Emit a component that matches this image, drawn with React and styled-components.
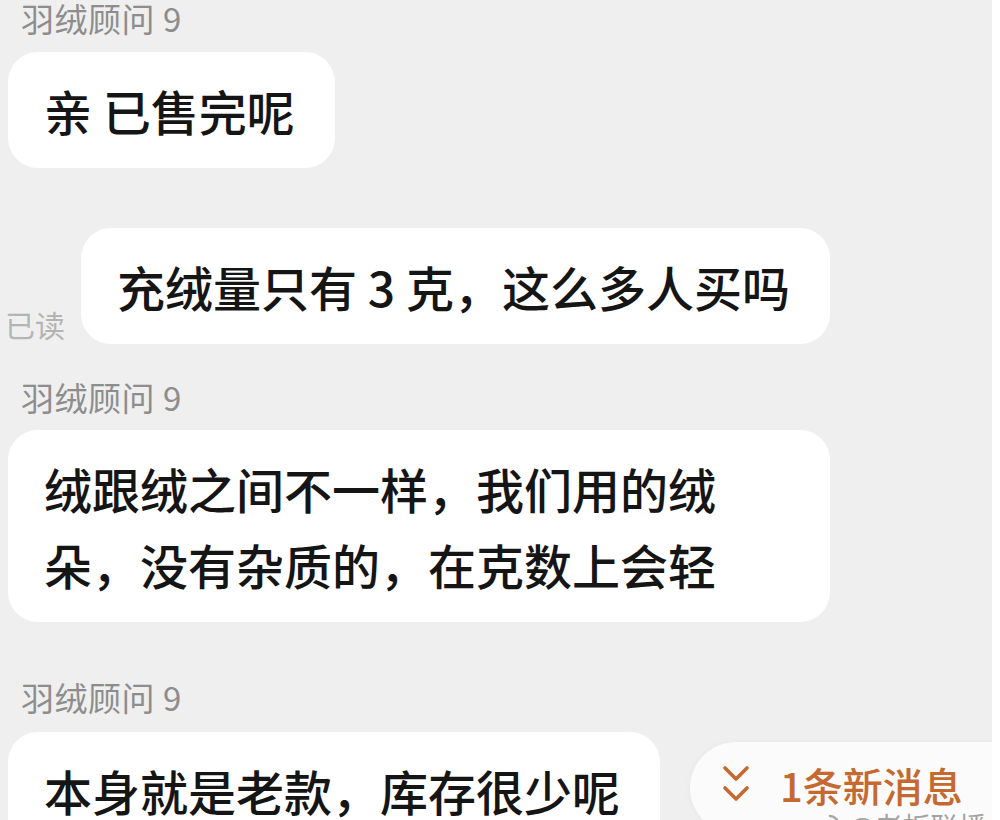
import React from "react";
import styled, { createGlobalStyle } from "styled-components";

const Global = createGlobalStyle`
  html, body {
    margin: 0;
    padding: 0;
    background: #ffffff;
  }
  body {
    font-family: "Noto Sans CJK SC", "Noto Sans", sans-serif;
  }
`;

const Page = styled.div`
  position: relative;
  width: 992px;
  height: 820px;
  overflow: hidden;
  background: #efefef;
  padding-left: 8px;
  box-sizing: border-box;
`;

const Column = styled.div`
  width: 822px;
  display: flex;
  flex-direction: column;
  align-items: flex-start;
`;

const Sender = styled.div`
  margin-top: ${(p) => p.$mt}px;
  margin-left: 13px;
  font-size: 33px;
  line-height: 36px;
  height: 36px;
  color: #8d8d8d;
  white-space: pre;
  letter-spacing: 0.5px;
`;

const Bubble = styled.div`
  margin-top: ${(p) => p.$mt}px;
  box-sizing: border-box;
  width: ${(p) => (p.$block ? "822px" : "auto")};
  padding: 20px 40px 20px 36px;
  background: #ffffff;
  border-radius: 30px;
  font-size: 48px;
  font-weight: 500;
  line-height: 76px;
  color: #151515;
  white-space: ${(p) => (p.$block ? "normal" : "pre")};
`;

const Wrap = styled.div`
  max-width: 700px;
`;

const SentRow = styled.div`
  margin-top: ${(p) => p.$mt}px;
  margin-left: -8px;
  width: 830px;
  display: flex;
  justify-content: flex-end;
  align-items: flex-end;
  gap: 16px;
`;

const ReadMark = styled.span`
  font-size: 30px;
  line-height: 40px;
  color: #b4b4b4;
  white-space: nowrap;
`;

const NewPill = styled.div`
  position: absolute;
  left: 690px;
  top: 742px;
  width: 360px;
  height: 92px;
  border-radius: 46px;
  background: #fbfbfb;
  box-shadow: 0 0 6px rgba(0, 0, 0, 0.04);
  display: flex;
  align-items: flex-start;
  padding: 22px 0 0 32px;
  box-sizing: border-box;
  gap: 30px;
`;

const NewText = styled.span`
  font-size: 40px;
  font-weight: 500;
  line-height: 42px;
  color: #c4692f;
`;

const Watermark = styled.div`
  position: absolute;
  left: 808px;
  top: 810px;
  display: flex;
  align-items: center;
  gap: 6px;
  font-size: 28px;
  line-height: 32px;
  color: #a4a4a4;
  white-space: nowrap;
`;

const Chevrons = () => (
  <svg width="28" height="40" viewBox="0 0 28 40">
    <path d="M3 4 L14 15 L25 4" fill="none" stroke="#c4692f" strokeWidth="3.6" strokeLinecap="round" strokeLinejoin="round" />
    <path d="M3 24 L14 35 L25 24" fill="none" stroke="#c4692f" strokeWidth="3.6" strokeLinecap="round" strokeLinejoin="round" />
  </svg>
);

const WeiboMark = () => (
  <svg width="34" height="28" viewBox="0 0 34 28">
    <ellipse cx="15" cy="18" rx="12" ry="8" fill="none" stroke="#a8a8a8" strokeWidth="2.5" />
    <path d="M22 4 A8 8 0 0 1 30 12" fill="none" stroke="#a8a8a8" strokeWidth="2.5" strokeLinecap="round" />
    <path d="M22 9 A3.5 3.5 0 0 1 25.5 12.5" fill="none" stroke="#a8a8a8" strokeWidth="2.5" strokeLinecap="round" />
  </svg>
);

export default function App() {
  return (
    <>
      <Global />
      <Page>
        <Column>
          <Sender $mt={0}>羽绒顾问 9</Sender>
          <Bubble $mt={16}>亲 已售完呢</Bubble>
          <SentRow $mt={60}>
            <ReadMark>已读</ReadMark>
            <Bubble $mt={0}>充绒量只有 3 克，这么多人买吗</Bubble>
          </SentRow>
          <Sender $mt={35}>羽绒顾问 9</Sender>
          <Bubble $mt={15} $block>
            <Wrap>绒跟绒之间不一样，我们用的绒朵，没有杂质的，在克数上会轻</Wrap>
          </Bubble>
          <Sender $mt={57}>羽绒顾问 9</Sender>
          <Bubble $mt={17}>本身就是老款，库存很少呢</Bubble>
        </Column>
        <NewPill>
          <Chevrons />
          <NewText>1条新消息</NewText>
        </NewPill>
        <Watermark>
          <WeiboMark />
          <span>@老板联播</span>
        </Watermark>
      </Page>
    </>
  );
}
